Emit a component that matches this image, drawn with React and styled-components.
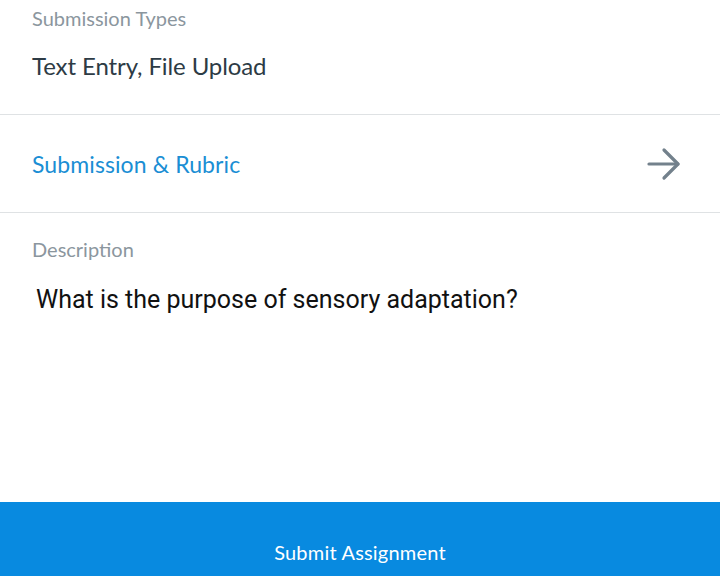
import React from 'react'
import styled, { createGlobalStyle } from 'styled-components'

const Global = createGlobalStyle`
  html, body { margin: 0; padding: 0; background: #fff; }
  body { font-family: "Lato", "Noto Sans", sans-serif; }
`

const Page = styled.div`
  width: 720px;
  height: 576px;
  display: flex;
  flex-direction: column;
  overflow: hidden;
`

const Section = styled.div`
  display: flex;
  flex-direction: column;
  padding: ${p => p.pad || '0 32px'};
  border-bottom: ${p => (p.divider ? '1px solid #dfe2e4' : 'none')};
  height: ${p => p.h || 'auto'};
  box-sizing: border-box;
`

const Label = styled.div`
  color: #8b969e;
  font-size: 20px;
  line-height: 24px;
`

const Value = styled.div`
  color: #2d3b45;
  font-size: 24px;
  line-height: 30px;
  margin-top: 21px;
  letter-spacing: -0.1px;
`

const LinkRow = styled.div`
  display: flex;
  align-items: center;
  justify-content: space-between;
  height: 97px;
  padding: 0 39px 0 32px;
  border-bottom: 1px solid #dfe2e4;
`

const LinkText = styled.div`
  color: #1a8ed4;
  font-size: 23px;
  letter-spacing: 0.1px;
`

const Body = styled.div`
  font-family: "Roboto", sans-serif;
  font-size: 25px;
  color: #111;
  margin-top: 24px;
  padding-left: 4px;
`

const Spacer = styled.div`
  flex: 1;
`

const SubmitBar = styled.div`
  height: 74px;
  background: #088ae0;
  color: #fff;
  display: flex;
  align-items: flex-end;
  justify-content: center;
  padding-bottom: 12px;
  box-sizing: border-box;
  font-size: 20px;
  letter-spacing: 0.2px;
`

const Arrow = () => (
  <svg width="34" height="34" viewBox="0 0 34 34" fill="none" stroke="#73818c" strokeWidth="3.2" strokeLinecap="round" strokeLinejoin="round">
    <path d="M2 17 H31" />
    <path d="M17 3 L31 17 L17 31" />
  </svg>
)

export default function App() {
  return (
    <Page>
      <Global />
      <Section divider h="115px" pad="6px 32px 0">
        <Label>Submission Types</Label>
        <Value>Text Entry, File Upload</Value>
      </Section>
      <LinkRow>
        <LinkText>Submission &amp; Rubric</LinkText>
        <Arrow />
      </LinkRow>
      <Section pad="24px 32px 0">
        <Label>Description</Label>
        <Body>What is the purpose of sensory adaptation?</Body>
      </Section>
      <Spacer />
      <SubmitBar>Submit Assignment</SubmitBar>
    </Page>
  )
}
